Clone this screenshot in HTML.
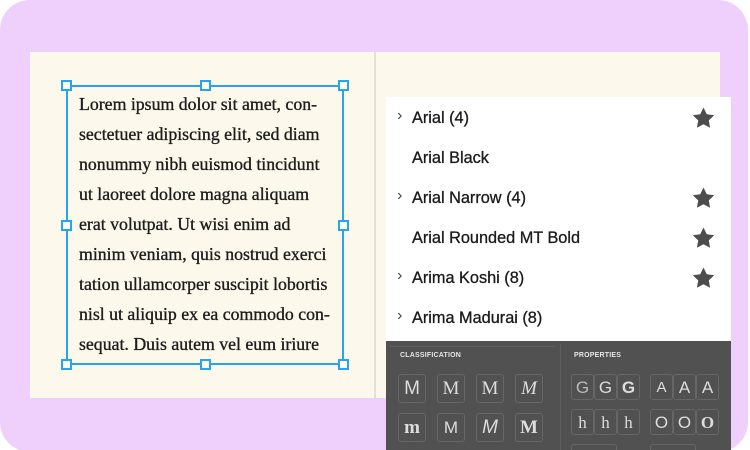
<!DOCTYPE html>
<html><head><meta charset="utf-8"><style>
*{margin:0;padding:0;box-sizing:border-box}
html,body{width:750px;height:450px;overflow:hidden}
body{background:#fff;position:relative;font-family:"Liberation Sans",sans-serif}
.bg{position:absolute;left:0;top:0;width:748px;height:452px;background:#efd0fc;border-radius:30px}
.page{position:absolute;left:30px;top:52px;width:690px;height:346px;background:#fcf8eb}
.div{position:absolute;left:374px;top:52px;width:2px;height:346px;background:#e6e0d2}
.sel{position:absolute;left:66px;top:85px;width:278px;height:280px;border:2.5px solid #27a4ef}
.h{position:absolute;width:11px;height:11px;background:#fff;border:2.5px solid #27a4ef}
.txt{position:absolute;left:79px;top:89px;font-family:"Liberation Serif",serif;font-size:17.8px;line-height:30px;color:#1c1c1c;white-space:pre;-webkit-text-stroke:0.35px #1c1c1c}
.panel{position:absolute;left:386px;top:97px;width:345px;height:244px;background:#fff}
.row{position:absolute;left:0;height:40px;width:345px;font-size:16.3px;color:#1a1a1a;line-height:40px;-webkit-text-stroke:0.3px #1a1a1a}
.row .n{position:absolute;left:26px}
.row .c{position:absolute;left:11px;font-size:16px;color:#444;top:-2px;-webkit-text-stroke:0}
.star{position:absolute;left:306px;top:9px}
.dark{position:absolute;left:386px;top:341px;width:345px;height:109px;background:#515151}
.lab{position:absolute;top:352px;font-size:7px;font-weight:bold;color:#e6e6e6;letter-spacing:.2px}
.t{position:absolute;width:28px;height:29px;border:1px solid #666;border-radius:3px;color:#ddd;text-align:center;line-height:28px;font-size:19px}
.p{position:absolute;width:23px;height:26px;border:1px solid #666;border-radius:3px;color:#ddd;text-align:center;line-height:25px;font-size:17px}
</style></head><body>
<div class="bg"></div>
<div class="page"></div>
<div class="div"></div>
<div class="txt">Lorem ipsum dolor sit amet, con-
sectetuer adipiscing elit, sed diam
nonummy nibh euismod tincidunt
ut laoreet dolore magna aliquam
erat volutpat. Ut wisi enim ad
minim veniam, quis nostrud exerci
tation ullamcorper suscipit lobortis
nisl ut aliquip ex ea commodo con-
sequat. Duis autem vel eum iriure</div>
<div class="sel"></div>
<div class="h" style="left:61px;top:80px"></div>
<div class="h" style="left:200px;top:80px"></div>
<div class="h" style="left:338px;top:80px"></div>
<div class="h" style="left:61px;top:220px"></div>
<div class="h" style="left:338px;top:220px"></div>
<div class="h" style="left:61px;top:359px"></div>
<div class="h" style="left:200px;top:359px"></div>
<div class="h" style="left:338px;top:359px"></div>

<div class="panel">
<div class="row" style="top:1px"><span class="c">›</span><span class="n">Arial (4)</span><svg class="star" width="23" height="22" viewBox="0 0 24 23"><path d="M12 0.5l3.4 7.1 7.8 1-5.7 5.4 1.4 7.7L12 18l-6.9 3.7 1.4-7.7L0.8 8.6l7.8-1z" fill="#4d4d4d"/></svg></div>
<div class="row" style="top:41px"><span class="n">Arial Black</span></div>
<div class="row" style="top:81px"><span class="c">›</span><span class="n">Arial Narrow (4)</span><svg class="star" width="23" height="22" viewBox="0 0 24 23"><path d="M12 0.5l3.4 7.1 7.8 1-5.7 5.4 1.4 7.7L12 18l-6.9 3.7 1.4-7.7L0.8 8.6l7.8-1z" fill="#4d4d4d"/></svg></div>
<div class="row" style="top:121px"><span class="n">Arial Rounded MT Bold</span><svg class="star" width="23" height="22" viewBox="0 0 24 23"><path d="M12 0.5l3.4 7.1 7.8 1-5.7 5.4 1.4 7.7L12 18l-6.9 3.7 1.4-7.7L0.8 8.6l7.8-1z" fill="#4d4d4d"/></svg></div>
<div class="row" style="top:161px"><span class="c">›</span><span class="n">Arima Koshi (8)</span><svg class="star" width="23" height="22" viewBox="0 0 24 23"><path d="M12 0.5l3.4 7.1 7.8 1-5.7 5.4 1.4 7.7L12 18l-6.9 3.7 1.4-7.7L0.8 8.6l7.8-1z" fill="#4d4d4d"/></svg></div>
<div class="row" style="top:201px"><span class="c">›</span><span class="n">Arima Madurai (8)</span></div>
</div>

<div class="dark"></div>
<div style="position:absolute;left:390px;top:346px;width:165px;height:1px;background:#5e5e5e"></div>
<div style="position:absolute;left:560px;top:344px;width:1px;height:106px;background:#5e5e5e"></div>
<div class="lab" style="left:400px">CLASSIFICATION</div>
<div class="lab" style="left:574px">PROPERTIES</div>

<div class="t" style="left:398px;top:374px">M</div>
<div class="t" style="left:437px;top:374px;font-family:'Liberation Serif',serif">M</div>
<div class="t" style="left:476px;top:374px;font-family:'Liberation Serif',serif">M</div>
<div class="t" style="left:515px;top:374px;font-family:'Liberation Serif',serif;font-style:italic">M</div>
<div class="t" style="left:398px;top:413px;font-family:'Liberation Serif',serif;font-weight:bold">m</div>
<div class="t" style="left:437px;top:413px;font-size:17px">M</div>
<div class="t" style="left:476px;top:413px;font-style:italic">M</div>
<div class="t" style="left:515px;top:413px;font-family:'Liberation Serif',serif;font-weight:bold">M</div>

<div class="p" style="left:571px;top:374px;color:#bbb">G</div>
<div class="p" style="left:594px;top:374px">G</div>
<div class="p" style="left:617px;top:374px;font-weight:bold">G</div>
<div class="p" style="left:650px;top:374px;font-size:15px">A</div>
<div class="p" style="left:673px;top:374px">A</div>
<div class="p" style="left:696px;top:374px">A</div>
<div class="p" style="left:571px;top:409px;font-family:'Liberation Serif',serif">h</div>
<div class="p" style="left:594px;top:409px;font-family:'Liberation Serif',serif">h</div>
<div class="p" style="left:617px;top:409px;font-family:'Liberation Serif',serif">h</div>
<div class="p" style="left:650px;top:409px">O</div>
<div class="p" style="left:673px;top:409px">O</div>
<div class="p" style="left:696px;top:409px;font-family:'Liberation Serif',serif;font-weight:bold">O</div>
<div class="p" style="left:571px;top:444px;width:46px"></div>
<div class="p" style="left:650px;top:444px;width:46px"></div>
</body></html>
